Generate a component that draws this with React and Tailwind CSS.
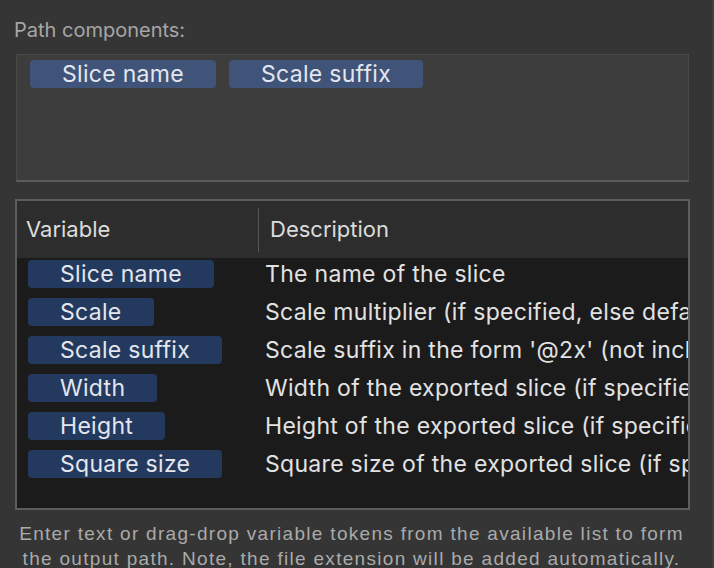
import React from "react";

const pathTokens = ["Slice name", "Scale suffix"];

const variables = [
  { name: "Slice name", desc: "The name of the slice" },
  { name: "Scale", desc: "Scale multiplier (if specified, else default 1x)" },
  { name: "Scale suffix", desc: "Scale suffix in the form '@2x' (not included for 1x)" },
  { name: "Width", desc: "Width of the exported slice (if specified)" },
  { name: "Height", desc: "Height of the exported slice (if specified)" },
  { name: "Square size", desc: "Square size of the exported slice (if specified)" },
];

const Token = ({ label, dark }) => (
  <span
    className={`block h-[28px] px-[32px] rounded-[4px] text-[23px] tracking-[0.3px] leading-[28px] text-[#e4e6ee] whitespace-nowrap ${
      dark ? "bg-[#233a5e]" : "bg-[#3f5478]"
    }`}
  >
    {label}
  </span>
);

export default function App() {
  return (
    <div
      className="w-[714px] h-[568px] overflow-hidden bg-[#353535] flex"
      style={{ fontFamily: "Inter, 'Noto Sans', sans-serif" }}
    >
      <div className="w-[712px] flex flex-col">
        {/* Label */}
        <div className="pl-[14px] pt-[18px] h-[54px] shrink-0 text-[20px] leading-[24px] text-[#a6a6a6]">
          Path components:
        </div>

        {/* Path components box */}
        <div className="ml-[16px] w-[673px] h-[128px] shrink-0 bg-[#3d3d3d] border-x border-t border-[#4a4a4a] border-b-2 border-b-[#5c5c5c] pl-[13px] pt-[5px] flex items-start gap-[13px]">
          {pathTokens.map((t) => (
            <Token key={t} label={t} />
          ))}
        </div>

        {/* Variables table */}
        <div className="mt-[17px] ml-[15px] w-[675px] h-[311px] shrink-0 border-2 border-[#5d5d5d] bg-[#1b1b1b] overflow-hidden flex flex-col">
          <div className="h-[57px] shrink-0 bg-[#2d2d2d] flex items-center text-[22px] text-[#dcdcdc]">
            <div className="w-[241px] pl-[9px]">Variable</div>
            <div className="w-px h-[44px] bg-[#555555]" />
            <div className="pl-[11px]">Description</div>
          </div>
          <div className="flex flex-col gap-[10px] pt-[2px]">
            {variables.map((v) => (
              <div key={v.name} className="h-[28px] flex items-center whitespace-nowrap">
                <div className="w-[248px] shrink-0 pl-[11px] flex">
                  <Token label={v.name} dark />
                </div>
                <div className="text-[23px] tracking-[0.3px] leading-[28px] text-[#e2e2e2]">{v.desc}</div>
              </div>
            ))}
          </div>
        </div>

        {/* Footer hint */}
        <div
          className="pt-[11px] pr-[9px] text-center text-[19px] tracking-[1.3px] leading-[25px] text-[#aaaaaa]"
          style={{ fontFamily: "'Liberation Sans', Arial, sans-serif" }}
        >
          Enter text or drag-drop variable tokens from the available list to form
          <br />
          the output path. Note, the file extension will be added automatically.
        </div>
      </div>
      <div className="w-[2px] bg-[#3f3f3f]" />
    </div>
  );
}
